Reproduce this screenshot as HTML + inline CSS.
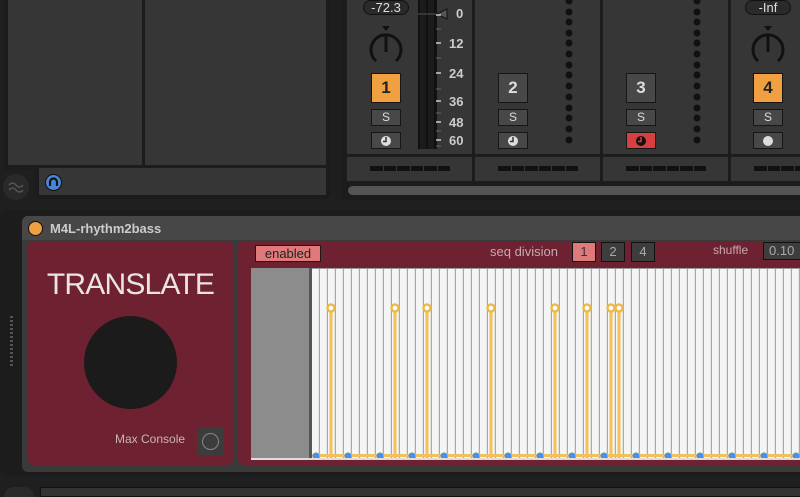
<!DOCTYPE html>
<html><head><meta charset="utf-8"><style>
*{margin:0;padding:0;box-sizing:border-box}
body{width:800px;height:497px;background:#1f1f1f;position:relative;overflow:hidden;font-family:"Liberation Sans",sans-serif}
.a{position:absolute}
.btn{position:absolute;width:30px;border:1px solid #161616;color:#ddd;text-align:center;font-weight:bold}
.big{height:30px;line-height:28px;font-size:17px;background:#484848}
.or{background:#f0a040;color:#222}
.s{height:17px;line-height:15px;font-size:12px;background:#484848;font-weight:normal}
.m{height:17px;background:#484848}
.pill{position:absolute;height:15px;border-radius:8px;background:#2a2a2a;border:1px solid #111;color:#ddd;font-size:13px;line-height:13px;text-align:center}
.num{position:absolute;color:#ccc;font-size:13px;font-weight:bold}
.sd{position:absolute;height:20px;width:24px;border:1px solid #111;font-size:13px;line-height:18px;text-align:center;color:#aaa;background:#3d3d3d}
</style></head><body>
<div class="a" style="left:4px;top:0;width:327px;height:170px;background:#1c1c1c"></div>
<div class="a" style="left:8px;top:0;width:134px;height:165px;background:#363636"></div>
<div class="a" style="left:145px;top:0;width:181px;height:165px;background:#363636"></div>
<div class="a" style="left:35px;top:166px;width:296px;height:33px;background:#1c1c1c;border-radius:0 0 6px 6px"></div>
<div class="a" style="left:39px;top:168px;width:287px;height:27px;background:#363636"></div>
<div class="a" style="left:45px;top:174px;width:17px;height:17px;border-radius:50%;background:#4a86d8;border:1.5px solid #111"></div>
<svg class="a" style="left:45px;top:174px" width="17" height="17"><path d="M5 12 V8 a3.5 3.5 0 0 1 7 0 V12" stroke="#111" stroke-width="2.2" fill="none"/></svg>
<div class="a" style="left:3px;top:174px;width:26px;height:26px;border-radius:50%;background:#2a2a2a"></div>
<svg class="a" style="left:8px;top:180px" width="16" height="14"><path d="M1 5 q3.5 -4 7 0 t7 0 M1 10 q3.5 -4 7 0 t7 0" stroke="#555" stroke-width="1.5" fill="none"/></svg>
<div class="a" style="left:341px;top:0;width:459px;height:200px;background:#1c1c1c"></div>
<div class="a" style="left:347px;top:0;width:125px;height:154px;background:#363636"></div>
<div class="a" style="left:475px;top:0;width:125px;height:154px;background:#363636"></div>
<div class="a" style="left:603px;top:0;width:125px;height:154px;background:#363636"></div>
<div class="a" style="left:731px;top:0;width:69px;height:154px;background:#363636"></div>
<div class="a" style="left:347px;top:157px;width:125px;height:24px;background:#363636"></div>
<div class="a" style="left:475px;top:157px;width:125px;height:24px;background:#363636"></div>
<div class="a" style="left:603px;top:157px;width:125px;height:24px;background:#363636"></div>
<div class="a" style="left:731px;top:157px;width:69px;height:24px;background:#363636"></div>
<div class="a" style="left:348px;top:186px;width:460px;height:9px;border-radius:5px;background:#555"></div>
<svg class="a" style="left:0;top:0" width="800" height="200">
<g fill="#111">
<rect x="370" y="166" width="80" height="5"/><rect x="498" y="166" width="80" height="5"/><rect x="626" y="166" width="80" height="5"/><rect x="754" y="166" width="46" height="5"/>
</g>
<g stroke="#363636" stroke-width="1.2">
<path d="M383.5 166v5M396.5 166v5M410.5 166v5M423.5 166v5M437.5 166v5M511.5 166v5M524.5 166v5M538.5 166v5M551.5 166v5M565.5 166v5M639.5 166v5M652.5 166v5M666.5 166v5M679.5 166v5M693.5 166v5M767.5 166v5M780.5 166v5M794.5 166v5"/>
</g>
<g fill="none" stroke="#111" stroke-width="3">
<path d="M376 61 A15 15 0 1 1 396 61"/><path d="M758 61 A15 15 0 1 1 778 61"/>
</g>
<path d="M386 36v16M768 36v16" stroke="#111" stroke-width="3"/>
<path d="M382 26h8l-4 5zM764 26h8l-4 5z" fill="#111"/>
<rect x="418" y="0" width="19" height="149" fill="#111"/>
<rect x="420" y="0" width="6" height="149" fill="#1b1b1b"/><rect x="428" y="0" width="6" height="149" fill="#1b1b1b"/>
<path d="M418 14h19" stroke="#555"/>
<path d="M437 14 l10 -5 v10z" fill="#555" stroke="#111"/>
<g stroke="#ccc" stroke-width="1.5"><path d="M436 43h5M436 73h5M436 101h5M436 122h5M436 140h5M436 15h5"/></g>
<g stroke="#666" stroke-width="1"><path d="M436 29h5M436 58h5M436 89h5M436 113h5M436 131h5M436 146h5"/></g>
<g fill="#111">
<circle cx="569" cy="1" r="3.5"/><circle cx="569" cy="12" r="3.5"/><circle cx="569" cy="22" r="3.5"/><circle cx="569" cy="33" r="3.5"/><circle cx="569" cy="43" r="3.5"/><circle cx="569" cy="54" r="3.5"/><circle cx="569" cy="65" r="3.5"/><circle cx="569" cy="75" r="3.5"/><circle cx="569" cy="86" r="3.5"/><circle cx="569" cy="97" r="3.5"/><circle cx="569" cy="108" r="3.5"/><circle cx="569" cy="118" r="3.5"/><circle cx="569" cy="129" r="3.5"/><circle cx="569" cy="140" r="3.5"/>
<circle cx="697" cy="1" r="3.5"/><circle cx="697" cy="12" r="3.5"/><circle cx="697" cy="22" r="3.5"/><circle cx="697" cy="33" r="3.5"/><circle cx="697" cy="43" r="3.5"/><circle cx="697" cy="54" r="3.5"/><circle cx="697" cy="65" r="3.5"/><circle cx="697" cy="75" r="3.5"/><circle cx="697" cy="86" r="3.5"/><circle cx="697" cy="97" r="3.5"/><circle cx="697" cy="108" r="3.5"/><circle cx="697" cy="118" r="3.5"/><circle cx="697" cy="129" r="3.5"/><circle cx="697" cy="140" r="3.5"/>
</g>
</svg>
<div class="num" style="left:456px;top:6px">0</div>
<div class="num" style="left:449px;top:36px">12</div>
<div class="num" style="left:449px;top:66px">24</div>
<div class="num" style="left:449px;top:94px">36</div>
<div class="num" style="left:449px;top:115px">48</div>
<div class="num" style="left:449px;top:133px">60</div>
<div class="pill" style="left:363px;top:0;width:46px">-72.3</div>
<div class="pill" style="left:745px;top:0;width:46px">-Inf</div>
<div class="btn big or" style="left:371px;top:73px">1</div>
<div class="btn big" style="left:498px;top:73px">2</div>
<div class="btn big" style="left:626px;top:73px">3</div>
<div class="btn big or" style="left:753px;top:73px">4</div>
<div class="btn s" style="left:371px;top:109px">S</div>
<div class="btn s" style="left:498px;top:109px">S</div>
<div class="btn s" style="left:626px;top:109px">S</div>
<div class="btn s" style="left:753px;top:109px">S</div>
<div class="btn m" style="left:371px;top:132px"><svg class="a" style="left:8px;top:2px" width="12" height="12"><circle cx="6" cy="6" r="5" fill="#ddd"/><path d="M6 2v4.5h-3" stroke="#333" stroke-width="1.5" fill="none"/></svg></div>
<div class="btn m" style="left:498px;top:132px"><svg class="a" style="left:8px;top:2px" width="12" height="12"><circle cx="6" cy="6" r="5" fill="#ddd"/><path d="M6 2v4.5h-3" stroke="#333" stroke-width="1.5" fill="none"/></svg></div>
<div class="btn m" style="left:626px;top:132px;background:#d84040"><svg class="a" style="left:8px;top:2px" width="12" height="12"><circle cx="6" cy="6" r="5" fill="#111"/><path d="M6 2v4.5h-3" stroke="#d84040" stroke-width="1.5" fill="none"/></svg></div>
<div class="btn m" style="left:753px;top:132px"><div class="a" style="left:9px;top:3px;width:10px;height:10px;border-radius:50%;background:#ddd"></div></div>
<div class="a" style="left:0;top:210px;width:800px;height:266px;background:#1c1c1c;border-radius:8px 0 0 8px"></div>
<div class="a" style="left:22px;top:216px;width:778px;height:256px;background:#3a3a3a;border-radius:6px 0 0 6px"></div>
<div class="a" style="left:22px;top:216px;width:778px;height:24px;background:#474747;border-radius:6px 0 0 0"></div>
<div class="a" style="left:28px;top:221px;width:15px;height:15px;border-radius:50%;background:#f0a040;border:1px solid #111"></div>
<div class="a" style="left:50px;top:221px;color:#ccc;font-size:13px;font-weight:bold">M4L-rhythm2bass</div>
<div class="a" style="left:10px;top:316px;width:3px;height:52px;background:repeating-linear-gradient(#555 0 2px,transparent 2px 4px)"></div>
<div class="a" style="left:28px;top:241px;width:205px;height:224px;background:#6e2130;border-radius:6px"></div>
<div class="a" style="left:28px;top:268px;width:205px;text-align:center;color:#ece4e4;font-size:30px;letter-spacing:-0.8px">TRANSLATE</div>
<div class="a" style="left:84px;top:316px;width:93px;height:93px;border-radius:50%;background:#1b1b1b"></div>
<div class="a" style="left:115px;top:432px;color:#c8b6b8;font-size:12px">Max Console</div>
<div class="a" style="left:197px;top:428px;width:27px;height:27px;background:#3c3c3c"><div class="a" style="left:5px;top:5px;width:17px;height:17px;border-radius:50%;border:1.5px solid #888"></div></div>
<div class="a" style="left:238px;top:241px;width:570px;height:224px;background:#6e2130;border-radius:6px"></div>
<div class="a" style="left:255px;top:245px;width:66px;height:17px;background:#e07a7a;border:1px solid #1a1a1a;color:#222;font-size:13px;line-height:15px;text-align:center">enabled</div>
<div class="a" style="left:490px;top:244px;color:#c8aaae;font-size:13px">seq division</div>
<div class="sd" style="left:572px;top:242px;background:#e07a7a;color:#333">1</div>
<div class="sd" style="left:601px;top:242px">2</div>
<div class="sd" style="left:631px;top:242px">4</div>
<div class="a" style="left:713px;top:243px;color:#c8aaae;font-size:12px">shuffle</div>
<div class="sd" style="left:763px;top:242px;width:42px;height:18px;line-height:16px;text-align:left;padding-left:5px">0.10</div>
<div class="a" style="left:251px;top:268px;width:60px;height:190px;background:#8c8c8c"></div>
<div class="a" style="left:309px;top:268px;width:3px;height:190px;background:#555"></div>
<div class="a" style="left:251px;top:458px;width:549px;height:2px;background:#ddd"></div>
<svg class="a" style="left:312px;top:268px" width="488" height="190">
<defs><pattern id="p" width="8" height="190" patternUnits="userSpaceOnUse"><rect width="8" height="190" fill="#f5f5f5"/><rect x="6.8" width="1.6" height="190" fill="#a8a8a8"/></pattern></defs>
<rect width="488" height="190" fill="url(#p)"/>
<rect width="488" height="1" fill="#999"/>
<rect x="-2" y="186" width="488" height="3" rx="1.5" fill="#f0c060"/>
<g fill="#4a90e8">
<circle cx="4" cy="188" r="3.5"/><circle cx="36" cy="188" r="3.5"/><circle cx="68" cy="188" r="3.5"/><circle cx="100" cy="188" r="3.5"/><circle cx="132" cy="188" r="3.5"/><circle cx="164" cy="188" r="3.5"/><circle cx="196" cy="188" r="3.5"/><circle cx="228" cy="188" r="3.5"/><circle cx="260" cy="188" r="3.5"/><circle cx="292" cy="188" r="3.5"/><circle cx="324" cy="188" r="3.5"/><circle cx="356" cy="188" r="3.5"/><circle cx="388" cy="188" r="3.5"/><circle cx="420" cy="188" r="3.5"/><circle cx="452" cy="188" r="3.5"/><circle cx="484" cy="188" r="3.5"/>
</g>
<g stroke="#f5c055" stroke-width="3">
<path d="M19 40V190M83 40V190M115 40V190M179 40V190M243 40V190M275 40V190M299 40V190M307 40V190"/>
</g>
<g fill="#fff" stroke="#f0b848" stroke-width="2.5">
<circle cx="19" cy="40" r="3.5"/><circle cx="83" cy="40" r="3.5"/><circle cx="115" cy="40" r="3.5"/><circle cx="179" cy="40" r="3.5"/><circle cx="243" cy="40" r="3.5"/><circle cx="275" cy="40" r="3.5"/><circle cx="299" cy="40" r="3.5"/><circle cx="307" cy="40" r="3.5"/>
</g>
</svg>
<div class="a" style="left:40px;top:487px;width:760px;height:10px;background:#333;border:1px solid #111;border-right:none"></div>
<div class="a" style="left:4px;top:487px;width:30px;height:10px;background:#2a2a2a;border-radius:10px 10px 0 0"></div>
</body></html>
